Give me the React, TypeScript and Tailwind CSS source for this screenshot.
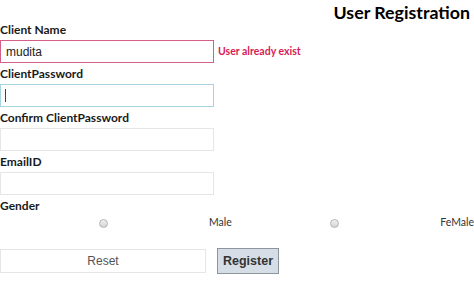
import { useState } from 'react';

const LABEL = "text-[12px] font-bold text-[#1a1a1a] leading-[14px] font-['Lato',sans-serif]";
const INPUT = "block w-[214px] h-[23px] px-[5px] text-[12px] text-[#222] bg-white border outline-none font-['Liberation_Sans',Arial,sans-serif]";

export default function App() {
  const [name, setName] = useState('mudita');

  return (
    <div className="w-[474px] h-[288px] bg-white overflow-hidden relative">
      <h2 className="absolute right-[4px] top-[-1px] text-[17.8px] font-bold text-black font-['Lato',sans-serif]">
        User Registration
      </h2>

      <div className="pt-[23px] flex flex-col">
        {/* Client Name */}
        <div className={LABEL}>Client Name</div>
        <div className="mt-[3px] flex items-center">
          <input
            value={name}
            onChange={e => setName(e.target.value)}
            className={`${INPUT} border-[#d4608a]`}
          />
          <span className="ml-[4px] text-[10.5px] font-bold text-[#d81b55] font-['Lato',sans-serif]">
            User already exist
          </span>
        </div>

        {/* Password */}
        <div className={`${LABEL} mt-[4px]`}>ClientPassword</div>
        <div className="mt-[3px] relative w-[214px]">
          <input type="password" className={`${INPUT} border-[#a9d4e2]`} />
          <span className="absolute left-[5px] top-[5px] w-[1px] h-[13px] bg-[#444]" />
        </div>

        {/* Confirm */}
        <div className={`${LABEL} mt-[4px]`}>Confirm ClientPassword</div>
        <input type="password" className={`${INPUT} mt-[3px] border-[#e6e6e6]`} />

        {/* Email */}
        <div className={`${LABEL} mt-[4px]`}>EmailID</div>
        <input className={`${INPUT} mt-[3px] border-[#e6e6e6]`} />

        {/* Gender */}
        <div className={`${LABEL} mt-[4px]`}>Gender</div>
        <div className="mt-[2px] flex items-center h-[16px] text-[10.5px] text-[#333] font-['Lato',sans-serif]">
          <div className="w-[206px] flex justify-center">
            <span className="w-[9px] h-[9px] rounded-full border border-[#b5b5b5] bg-gradient-to-b from-[#f0f0f0] to-[#d4d4d4]" />
          </div>
          <span className="ml-[3px] w-[121px]">Male</span>
          <span className="w-[9px] h-[9px] rounded-full border border-[#b5b5b5] bg-gradient-to-b from-[#f0f0f0] to-[#d4d4d4]" />
          <span className="flex-1 text-right">FeMale</span>
        </div>

        {/* Buttons */}
        <div className="mt-[17px] flex items-center font-['Liberation_Sans',Arial,sans-serif]">
          <button className="w-[206px] h-[24px] bg-white border border-[#e6e6e6] text-[12px] text-[#555]">
            Reset
          </button>
          <button className="ml-[11px] w-[62px] h-[26px] bg-[#d5dde6] border border-[#8e9499] text-[12.5px] font-bold text-[#333]">
            Register
          </button>
        </div>
      </div>
    </div>
  );
}
